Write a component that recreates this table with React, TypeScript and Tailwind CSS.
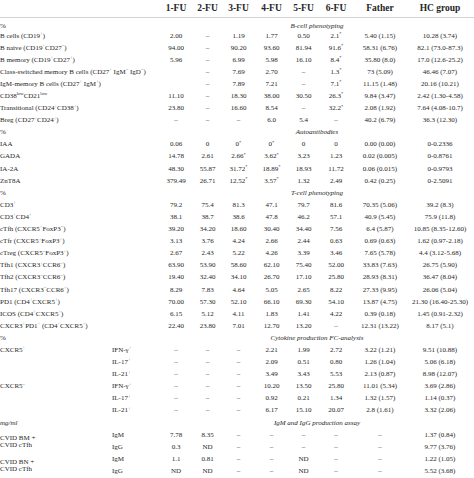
import React from "react";

const cols =
    "grid grid-cols-[112px_48px_32px_31px_31px_35px_29px_36px_52px_68px]";

function Sup({ children }: { children: React.ReactNode }) {
    return <sup className="text-[4.6px] -top-[2.6px]">{children}</sup>;
}

function Val({ v }: { v: string }) {
    if (v.endsWith("*")) {
        return (
            <>
                {v.slice(0, -1)}
                <Sup>*</Sup>
            </>
        );
    }
    return <>{v}</>;
}

type Row =
    | { kind: "section"; unit: React.ReactNode; title: string }
    | { kind: "data"; label?: React.ReactNode; sub?: React.ReactNode; vals: string[]; twoLine?: boolean };

const D = "–";

const rows: Row[] = [
    { kind: "section", unit: "%", title: "B-cell phenotyping" },
    { kind: "data", label: <>B cells (CD19<Sup>+</Sup>)</>, vals: ["2.00", D, "1.19", "1.77", "0.50", "2.1*", "5.40 (1.15)", "10.28 (3.74)"] },
    { kind: "data", label: <>B naive (CD19<Sup>+</Sup>CD27<Sup>−</Sup>)</>, vals: ["94.00", D, "90.20", "93.60", "81.94", "91.6*", "58.31 (6.76)", "82.1 (73.0-87.3)"] },
    { kind: "data", label: <>B memory (CD19<Sup>+</Sup>CD27<Sup>+</Sup>)</>, vals: ["5.96", D, "6.99", "5.98", "16.10", "8.4*", "35.80 (8.0)", "17.0 (12.6-25.2)"] },
    { kind: "data", label: <>Class-switched memory B cells (CD27<Sup>+</Sup> IgM<Sup>−</Sup> IgD<Sup>−</Sup>)</>, vals: ["", D, "7.69", "2.70", D, "1.3*", "73 (5.09)", "46.46 (7.07)"] },
    { kind: "data", label: <>IgM-memory B cells (CD27<Sup>+</Sup> IgM<Sup>+</Sup>)</>, vals: ["", D, "7.89", "7.21", D, "7.1*", "11.15 (1.48)", "20.16 (10.21)"] },
    { kind: "data", label: <>CD38<Sup>low</Sup>CD21<Sup>low</Sup></>, vals: ["11.10", D, "18.30", "38.00", "30.50", "26.3*", "9.84 (3.47)", "2.42 (1.30-4.58)"] },
    { kind: "data", label: <>Transitional (CD24<Sup>+</Sup>CD38<Sup>+</Sup>)</>, vals: ["23.80", D, "16.60", "8.54", D, "32.2*", "2.08 (1.92)", "7.64 (4.08-10.7)"] },
    { kind: "data", label: <>Breg (CD27<Sup>+</Sup>CD24<Sup>+</Sup>)</>, vals: [D, D, D, "6.0", "5.4", D, "40.2 (6.79)", "36.3 (12.30)"] },
    { kind: "section", unit: "%", title: "Autoantibodies" },
    { kind: "data", label: "IAA", vals: ["0.06", "0", "0*", "0*", "0", "0", "0.00 (0.00)", "0-0.2336"] },
    { kind: "data", label: "GADA", vals: ["14.78", "2.61", "2.66*", "3.62*", "3.23", "1.23", "0.02 (0.005)", "0-0.8761"] },
    { kind: "data", label: "IA-2A", vals: ["48.30", "55.87", "31.72*", "18.89*", "18.93", "11.72", "0.06 (0.015)", "0-0.9793"] },
    { kind: "data", label: "ZnT8A", vals: ["379.49", "26.71", "12.52*", "3.57*", "1.32", "2.49", "0.42 (0.25)", "0-2.5091"] },
    { kind: "section", unit: "%", title: "T-cell phenotyping" },
    { kind: "data", label: <>CD3<Sup>+</Sup></>, vals: ["79.2", "75.4", "81.3", "47.1", "79.7", "81.6", "70.35 (5.06)", "39.2 (8.3)"] },
    { kind: "data", label: <>CD3<Sup>+</Sup>CD4<Sup>+</Sup></>, vals: ["38.1", "38.7", "38.6", "47.8", "46.2", "57.1", "40.9 (5.45)", "75.9 (11.8)"] },
    { kind: "data", label: <>cTfh (CXCR5<Sup>+</Sup>FoxP3<Sup>−</Sup>)</>, vals: ["39.20", "34.20", "18.60", "30.40", "34.40", "7.56", "6.4 (5.87)", "10.85 (8.35-12.60)"] },
    { kind: "data", label: <>cTfr (CXCR5<Sup>+</Sup>FoxP3<Sup>+</Sup>)</>, vals: ["3.13", "3.76", "4.24", "2.66", "2.44", "0.63", "0.69 (0.63)", "1.62 (0.97-2.18)"] },
    { kind: "data", label: <>cTreg (CXCR5<Sup>−</Sup>FoxP3<Sup>+</Sup>)</>, vals: ["2.67", "2.43", "5.22", "4.26", "3.39", "3.46", "7.65 (5.78)", "4.4 (3.12-5.68)"] },
    { kind: "data", label: <>Tfh1 (CXCR3<Sup>+</Sup>CCR6<Sup>−</Sup>)</>, vals: ["63.90", "53.90", "58.60", "62.10", "75.40", "52.00", "33.83 (7.63)", "26.75 (5.90)"] },
    { kind: "data", label: <>Tfh2 (CXCR3<Sup>−</Sup>CCR6<Sup>−</Sup>)</>, vals: ["19.40", "32.40", "34.10", "26.70", "17.10", "25.80", "28.93 (8.31)", "36.47 (8.04)"] },
    { kind: "data", label: <>Tfh17 (CXCR3<Sup>−</Sup>CCR6<Sup>+</Sup>)</>, vals: ["8.29", "7.83", "4.64", "5.05", "2.65", "8.22", "27.33 (9.95)", "26.06 (5.04)"] },
    { kind: "data", label: <>PD1 (CD4<Sup>+</Sup>CXCR5<Sup>+</Sup>)</>, vals: ["70.00", "57.30", "52.10", "66.10", "69.30", "54.10", "13.87 (4.75)", "21.30 (16.40-25.30)"] },
    { kind: "data", label: <>ICOS (CD4<Sup>+</Sup>CXCR5<Sup>+</Sup>)</>, vals: ["6.15", "5.12", "4.11", "1.83", "1.41", "4.22", "0.39 (0.18)", "1.45 (0.91-2.32)"] },
    { kind: "data", label: <>CXCR3<Sup>+</Sup>PD1<Sup>+</Sup> (CD4<Sup>+</Sup>CXCR5<Sup>+</Sup>)</>, vals: ["22.40", "23.80", "7.01", "12.70", "13.20", D, "12.31 (13.22)", "8.17 (5.1)"] },
    { kind: "section", unit: "%", title: "Cytokine production FC-analysis" },
    { kind: "data", label: <>CXCR5<Sup>+</Sup></>, sub: <>IFN-γ<Sup>+</Sup></>, vals: [D, D, D, "2.21", "1.99", "2.72", "3.22 (1.21)", "9.51 (10.88)"] },
    { kind: "data", sub: <>IL-17<Sup>+</Sup></>, vals: [D, D, D, "2.09", "0.51", "0.80", "1.26 (1.04)", "5.06 (6.18)"] },
    { kind: "data", sub: <>IL-21<Sup>+</Sup></>, vals: [D, D, D, "3.49", "3.43", "5.53", "2.13 (0.87)", "8.98 (12.07)"] },
    { kind: "data", label: <>CXCR5<Sup>−</Sup></>, sub: <>IFN-γ<Sup>+</Sup></>, vals: [D, D, D, "10.20", "13.50", "25.80", "11.01 (5.34)", "3.69 (2.86)"] },
    { kind: "data", sub: <>IL-17<Sup>+</Sup></>, vals: [D, D, D, "0.92", "0.21", "1.34", "1.32 (1.57)", "1.14 (0.37)"] },
    { kind: "data", sub: <>IL-21<Sup>+</Sup></>, vals: [D, D, D, "6.17", "15.10", "20.07", "2.8 (1.61)", "3.32 (2.06)"] },
    { kind: "section", unit: <i>mg/ml</i>, title: "IgM and IgG production assay" },
    { kind: "data", twoLine: true, label: <>CVID BM +<br />CVID cTfh</>, sub: "IgM", vals: ["7.78", "8.35", D, D, D, D, D, "1.37 (0.84)"] },
    { kind: "data", sub: "IgG", vals: ["0.3", "ND", D, D, D, D, D, "9.77 (3.76)"] },
    { kind: "data", twoLine: true, label: <>CVID BN +<br />CVID cTfh</>, sub: "IgM", vals: ["1.1", "0.81", D, D, "ND", D, D, "1.22 (1.05)"] },
    { kind: "data", sub: "IgG", vals: ["ND", "ND", D, D, "ND", D, D, "5.52 (3.68)"] },
];

const headers = ["1-FU", "2-FU", "3-FU", "4-FU", "5-FU", "6-FU", "Father", "HC group"];

export default function App() {
    return (
        <div className="w-[474px] h-[478px] overflow-hidden bg-white text-[#262626] font-['Liberation_Serif',serif]">
            {/* Column headers */}
            <div className={`${cols} h-[18px] items-center border-b border-[#d4d4d4] text-[9.5px] font-bold leading-none`}>
                <div className="col-span-2" />
                {headers.map((h) => (
                    <div key={h} className="text-center whitespace-nowrap">
                        {h}
                    </div>
                ))}
            </div>

            {/* Body rows */}
            <div className="text-[7px] leading-none">
                {rows.map((r, i) =>
                    r.kind === "section" ? (
                        <div
                            key={i}
                            className={`${cols} ${i === 0 ? "h-[12px] items-end" : "h-[12.1px] items-center"}`}
                        >
                            <div className="col-span-2">{r.unit}</div>
                            <div className="col-span-8 text-center italic whitespace-nowrap">{r.title}</div>
                        </div>
                    ) : (
                        <div key={i} className={`${cols} grid-rows-[12.1px] h-[12.1px] items-center`}>
                            {r.sub !== undefined ? (
                                <>
                                    {r.twoLine ? (
                                        <div className="self-start pt-[6px] leading-[7px] whitespace-nowrap">
                                            {r.label}
                                        </div>
                                    ) : (
                                        <div className="whitespace-nowrap">{r.label}</div>
                                    )}
                                    <div className="whitespace-nowrap">{r.sub}</div>
                                </>
                            ) : (
                                <div className="col-span-2 whitespace-nowrap">{r.label}</div>
                            )}
                            {r.vals.map((v, j) => (
                                <div key={j} className="text-center whitespace-nowrap">
                                    <Val v={v} />
                                </div>
                            ))}
                        </div>
                    )
                )}
            </div>
        </div>
    );
}
